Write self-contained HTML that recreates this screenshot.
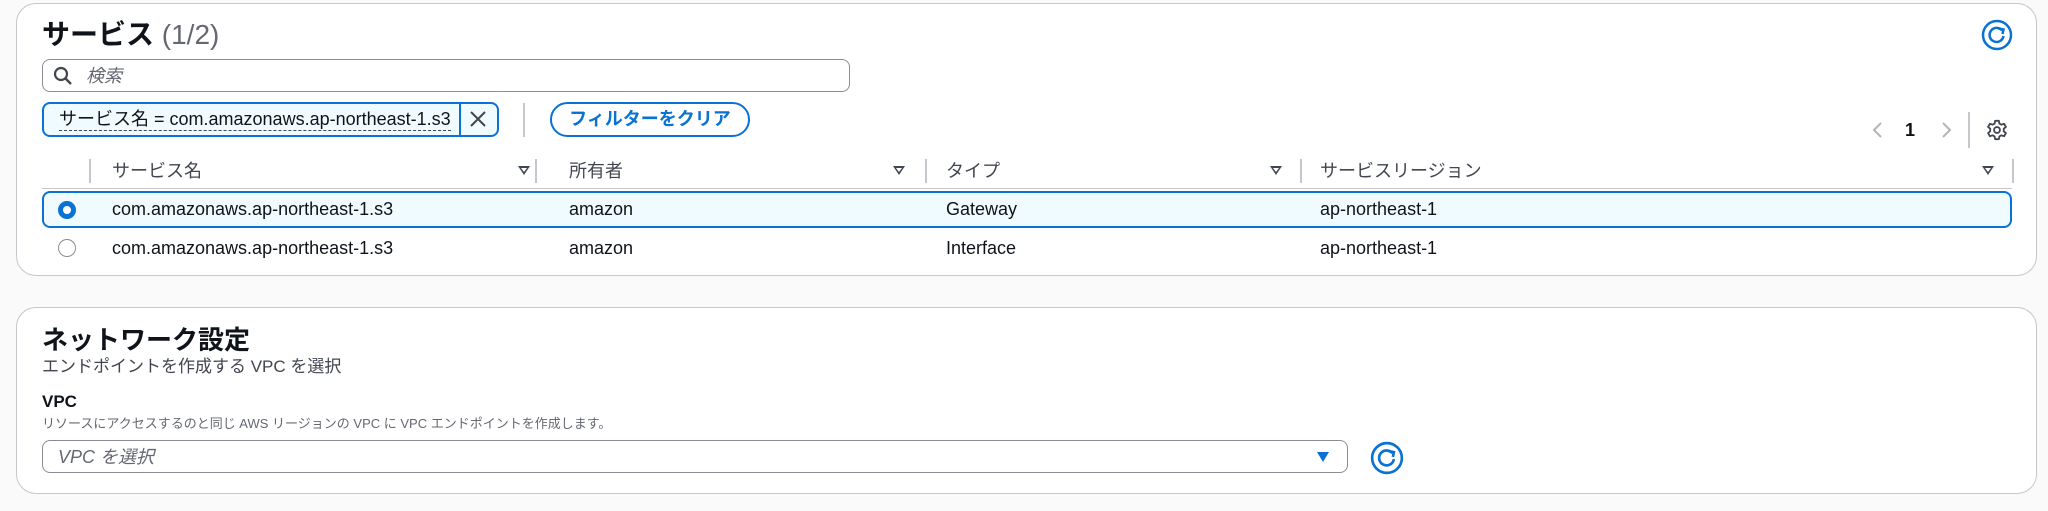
<!DOCTYPE html>
<html><head><meta charset="utf-8"><style>
*{box-sizing:border-box;margin:0;padding:0}
body{width:2048px;height:511px;background:#fafafa;font-family:"Liberation Sans","Noto Sans CJK JP",sans-serif;color:#0f141a;position:relative;overflow:hidden}
.a{position:absolute;white-space:nowrap}
.card{position:absolute;left:16px;right:11px;background:#fff;border:1px solid #c6c6cd;border-radius:20px}
.t{font-size:18px;line-height:20px}
.vd{position:absolute;width:2px;background:#c6c6cd}
.tri{position:absolute;width:0;height:0;border-left:6px solid transparent;border-right:6px solid transparent;border-top:9px solid #424650}
.tri::after{content:"";position:absolute;left:-3px;top:-7px;border-left:3px solid transparent;border-right:3px solid transparent;border-top:4px solid #fff}
</style></head><body>
<div class="card" style="top:3px;height:273px"></div>
<div class="a" style="left:42px;top:19px;font-size:28px;font-weight:bold;line-height:32px">サービス <span style="font-weight:normal;color:#656871">(1/2)</span></div>
<svg class="a" style="left:1981px;top:19px" width="32" height="32" viewBox="0 0 32 32"><circle cx="16" cy="16" r="14" fill="none" stroke="#0972d3" stroke-width="2.5"/><path d="M21 11.5A7 7 0 1 0 22.5 17" fill="none" stroke="#0972d3" stroke-width="2.5"/><path d="M17.5 9.5L22.5 10.5L21.5 15" fill="none" stroke="#0972d3" stroke-width="2.5"/></svg>
<div class="a" style="left:42px;top:59px;width:808px;height:33px;border:1.5px solid #8c8c94;border-radius:8px"></div>
<svg class="a" style="left:53px;top:66px" width="20" height="20" viewBox="0 0 20 20"><circle cx="8" cy="8" r="6" fill="none" stroke="#424650" stroke-width="2.2"/><path d="M12.5 12.5L18 18" stroke="#424650" stroke-width="2.4"/></svg>
<div class="a t" style="left:86px;top:66px;color:#656871;font-style:italic">検索</div>
<div class="a" style="left:42px;top:102px;width:457px;height:35px;border:2px solid #0972d3;border-radius:8px;background:#f0fbff"></div>
<div class="a" style="left:459px;top:104px;width:2px;height:31px;background:#0972d3"></div>
<div class="a t" style="left:59px;top:109px;border-bottom:1.5px dashed #424650;padding-bottom:1px">サービス名 = com.amazonaws.ap-northeast-1.s3</div>
<svg class="a" style="left:469px;top:110px" width="18" height="18" viewBox="0 0 18 18"><path d="M2 2L16 16M16 2L2 16" stroke="#424650" stroke-width="2"/></svg>
<div class="vd" style="left:523px;top:103px;height:34px"></div>
<div class="a" style="left:550px;top:102px;width:200px;height:35px;border:2px solid #0972d3;border-radius:18px;color:#0972d3;font-weight:bold;font-size:18px;line-height:31px;text-align:center">フィルターをクリア</div>
<svg class="a" style="left:1870px;top:120px" width="16" height="20" viewBox="0 0 16 20"><path d="M11 3L4 10L11 17" fill="none" stroke="#b4b4bb" stroke-width="2"/></svg>
<div class="a t" style="left:1905px;top:120px;font-weight:bold">1</div>
<svg class="a" style="left:1938px;top:120px" width="16" height="20" viewBox="0 0 16 20"><path d="M5 3L12 10L5 17" fill="none" stroke="#b4b4bb" stroke-width="2"/></svg>
<div class="vd" style="left:1968px;top:112px;height:36px"></div>
<svg class="a" style="left:1986px;top:119px" width="22" height="22" viewBox="0 0 24 24"><path d="M10 2h4l.6 3 2.2 1.2 2.9-1 2 3.4-2.3 2v2.8l2.3 2-2 3.4-2.9-1L14.6 19 14 22h-4l-.6-3-2.2-1.2-2.9 1-2-3.4 2.3-2v-2.8l-2.3-2 2-3.4 2.9 1L9.4 5z" fill="none" stroke="#424650" stroke-width="2" stroke-linejoin="round"/><circle cx="12" cy="12" r="3.2" fill="none" stroke="#424650" stroke-width="2"/></svg>
<div class="vd" style="left:89px;top:159px;height:24px"></div>
<div class="a t" style="left:112px;top:161px;color:#424650">サービス名</div>
<div class="tri" style="left:518px;top:166px"></div><div class="vd" style="left:535px;top:159px;height:24px"></div>
<div class="a t" style="left:569px;top:161px;color:#424650">所有者</div>
<div class="tri" style="left:893px;top:166px"></div><div class="vd" style="left:925px;top:159px;height:24px"></div>
<div class="a t" style="left:946px;top:161px;color:#424650">タイプ</div>
<div class="tri" style="left:1270px;top:166px"></div><div class="vd" style="left:1300px;top:159px;height:24px"></div>
<div class="a t" style="left:1320px;top:161px;color:#424650">サービスリージョン</div>
<div class="tri" style="left:1982px;top:166px"></div><div class="vd" style="left:2012px;top:159px;height:24px"></div>
<div class="a" style="left:42px;top:188px;width:1970px;height:1px;background:#c6c6cd"></div>
<div class="a" style="left:42px;top:191px;width:1970px;height:37px;border:2px solid #0972d3;border-radius:8px;background:#f0fbff"></div>
<div class="a" style="left:58px;top:201px;width:18px;height:18px;border-radius:50%;border:5px solid #0972d3;background:#fff"></div>
<div class="a t" style="left:112px;top:199px">com.amazonaws.ap-northeast-1.s3</div>
<div class="a t" style="left:569px;top:199px">amazon</div>
<div class="a t" style="left:946px;top:199px">Gateway</div>
<div class="a t" style="left:1320px;top:199px">ap-northeast-1</div>
<div class="a" style="left:58px;top:239px;width:18px;height:18px;border-radius:50%;border:1.5px solid #8c8c94;background:#fff"></div>
<div class="a t" style="left:112px;top:238px">com.amazonaws.ap-northeast-1.s3</div>
<div class="a t" style="left:569px;top:238px">amazon</div>
<div class="a t" style="left:946px;top:238px">Interface</div>
<div class="a t" style="left:1320px;top:238px">ap-northeast-1</div>

<div class="card" style="top:307px;height:187px"></div>
<div class="a" style="left:42px;top:324px;font-size:26px;font-weight:bold;line-height:32px">ネットワーク設定</div>
<div class="a" style="left:42px;top:357px;font-size:17px;line-height:20px;color:#424650">エンドポイントを作成する VPC を選択</div>
<div class="a" style="left:42px;top:392px;font-size:17px;line-height:20px;font-weight:bold">VPC</div>
<div class="a" style="left:42px;top:416px;font-size:13px;line-height:16px;color:#656871">リソースにアクセスするのと同じ AWS リージョンの VPC に VPC エンドポイントを作成します。</div>
<div class="a" style="left:42px;top:440px;width:1306px;height:33px;border:1.5px solid #8c8c94;border-radius:8px"></div>
<div class="a t" style="left:58px;top:447px;color:#656871;font-style:italic">VPC を選択</div>
<div class="a" style="left:1317px;top:452px;border-left:6px solid transparent;border-right:6px solid transparent;border-top:10px solid #0972d3"></div>
<svg class="a" style="left:1370px;top:441px" width="34" height="34" viewBox="0 0 32 32"><circle cx="16" cy="16" r="14" fill="none" stroke="#0972d3" stroke-width="2.5"/><path d="M21 11.5A7 7 0 1 0 22.5 17" fill="none" stroke="#0972d3" stroke-width="2.5"/><path d="M17.5 9.5L22.5 10.5L21.5 15" fill="none" stroke="#0972d3" stroke-width="2.5"/></svg>
</body></html>
